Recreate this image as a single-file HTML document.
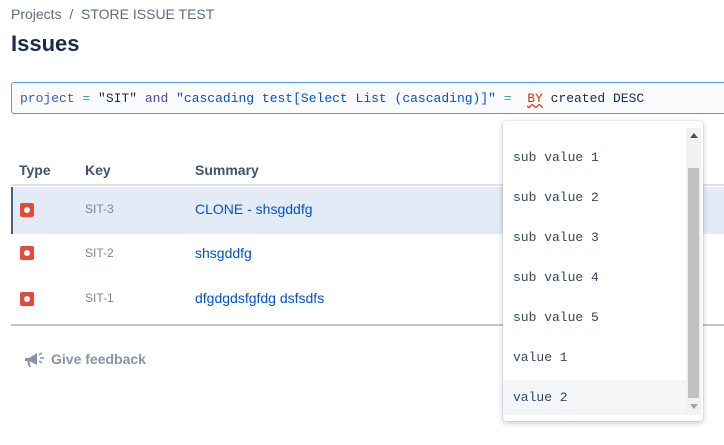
<!DOCTYPE html>
<html><head><style>
body{margin:0;width:724px;height:445px;overflow:hidden;background:#fff;font-family:"Liberation Sans",sans-serif;position:relative;color:#172b4d}
.a{position:absolute;white-space:nowrap}
.mono{font-family:"Liberation Mono",monospace}
</style></head><body>
<div class="a" style="left:11px;top:6px;font-size:14px;color:#5e6c84">Projects&nbsp;&nbsp;/&nbsp;&nbsp;STORE ISSUE TEST</div>
<div class="a" style="left:11px;top:31px;font-size:22px;font-weight:bold;color:#172b4d">Issues</div>
<div class="a" style="left:11px;top:82px;width:730px;height:30px;border:1px solid #4c9aff;border-radius:3px;background:#fafbfc"></div>
<div class="a mono" style="left:20px;top:90px;font-size:13px;line-height:18px"><span style="color:#3e5bb5">project</span> <span style="color:#36b37e">=</span> <span style="color:#172b4d">"SIT"</span> <span style="color:#5243aa">and</span> <span style="color:#0052cc">"cascading test[Select List (cascading)]"</span> <span style="color:#36b37e">=</span>&nbsp; <span style="color:#de350b;text-decoration:underline wavy #de350b">BY</span> created DESC</div>
<div class="a" style="left:19px;top:162px;font-size:14px;font-weight:bold;color:#42526e">Type</div>
<div class="a" style="left:85px;top:162px;font-size:14px;font-weight:bold;color:#42526e">Key</div>
<div class="a" style="left:195px;top:162px;font-size:14px;font-weight:bold;color:#42526e">Summary</div>
<div class="a" style="left:11px;top:184px;width:713px;height:2px;background:#dfe1e6"></div>
<div class="a" style="left:11px;top:187px;width:713px;height:47px;background:#e3ebf7"></div>
<div class="a" style="left:11px;top:187px;width:2px;height:47px;background:#505f79"></div>
<div class="a" style="left:11px;top:324px;width:713px;height:2px;background:#c1c7d0"></div>
<div class="a" style="left:20px;top:203px;width:14px;height:14px;background:#e5493a;border-radius:2px"><div style="position:absolute;left:4px;top:4px;width:6px;height:6px;border-radius:3px;background:#fff"></div></div>
<div class="a" style="left:20px;top:246px;width:14px;height:14px;background:#e5493a;border-radius:2px"><div style="position:absolute;left:4px;top:4px;width:6px;height:6px;border-radius:3px;background:#fff"></div></div>
<div class="a" style="left:20px;top:292px;width:14px;height:14px;background:#e5493a;border-radius:2px"><div style="position:absolute;left:4px;top:4px;width:6px;height:6px;border-radius:3px;background:#fff"></div></div>
<div class="a" style="left:85px;top:202px;font-size:12px;color:#7a869a">SIT-3</div>
<div class="a" style="left:85px;top:246px;font-size:12px;color:#7a869a">SIT-2</div>
<div class="a" style="left:85px;top:291px;font-size:12px;color:#7a869a">SIT-1</div>
<div class="a" style="left:195px;top:201px;font-size:14px;color:#0052cc">CLONE - shsgddfg</div>
<div class="a" style="left:195px;top:245px;font-size:14px;color:#0052cc">shsgddfg</div>
<div class="a" style="left:195px;top:290px;font-size:14px;color:#0052cc">dfgdgdsfgfdg dsfsdfs</div>
<svg class="a" style="left:24px;top:350px" width="22" height="18" viewBox="0 0 22 18"><path d="M1 8h4l8-5v12l-8-4H1z" fill="#8993a4"/><path d="M4 11l2 6" stroke="#8993a4" stroke-width="2"/><path d="M15 5l3-2M16 8h4M15 11l3 2" stroke="#8993a4" stroke-width="1.5"/></svg>
<div class="a" style="left:51px;top:351px;font-size:14px;font-weight:bold;color:#8993a4">Give feedback</div>
<div class="a" style="left:503px;top:121px;width:200px;height:300px;background:#fff;border-radius:3px;box-shadow:0 2px 6px rgba(9,30,66,.25),0 0 1px rgba(9,30,66,.3);overflow:hidden">
<div style="position:absolute;left:0;top:259px;width:183px;height:35px;background:#f4f5f7"></div>
<div style="position:absolute;left:183px;top:7px;width:15px;height:287px;background:#f1f1f1"></div>
<div style="position:absolute;left:185px;top:47px;width:11px;height:230px;background:#c1c1c1"></div>
<div style="position:absolute;left:187px;top:12px;width:0;height:0;border-left:4px solid transparent;border-right:4px solid transparent;border-bottom:5px solid #505050"></div>
<div style="position:absolute;left:187px;top:283px;width:0;height:0;border-left:4px solid transparent;border-right:4px solid transparent;border-top:5px solid #a3a3a3"></div>
<div class="mono" style="position:absolute;left:10px;top:17px;font-size:13px;line-height:40px;color:#344563">sub value 1<br>sub value 2<br>sub value 3<br>sub value 4<br>sub value 5<br>value 1<br>value 2</div>
</div>
</body></html>
